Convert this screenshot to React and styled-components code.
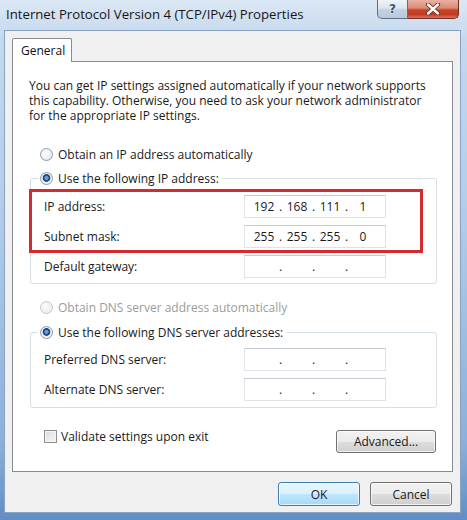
import React from "react";
import styled, { createGlobalStyle, css } from "styled-components";

const Global = createGlobalStyle`
  html, body { margin: 0; padding: 0; background: #8fb1d8; }
  * { box-sizing: border-box; }
`;

const FONT = `"Open Sans", "Noto Sans", "Liberation Sans", sans-serif`;

const Window = styled.div`
  width: 467px;
  height: 520px;
  display: flex;
  flex-direction: column;
  padding: 0 6px 7px 4px;
  background: linear-gradient(180deg, #dbe7f4 0%, #c4d8ee 8%, #b3cde9 40%, #8cb0da 85%, #5f8fc6 100%);
  font-family: ${FONT};
  color: #111;
`;

const TitleBar = styled.div`
  height: 30px;
  display: flex;
  align-items: flex-start;
  flex-shrink: 0;
`;

const TitleText = styled.div`
  padding: 5px 0 0 2px;
  font-size: 13.2px;
  line-height: 18px;
  color: #151515;
  white-space: nowrap;
`;

const Captions = styled.div`
  margin-left: auto;
  margin-right: 2px;
  display: flex;
`;

const CaptionButton = styled.div`
  height: 19px;
  display: flex;
  align-items: center;
  justify-content: center;
  border: 1px solid #5d6f86;
  border-top: none;
  ${(p) =>
    p.$kind === "close"
      ? css`
          width: 51px;
          border-color: #6e3025;
          border-left: none;
          border-radius: 0 0 5px 0;
          background: linear-gradient(180deg, #eab0a2 0%, #dc8a76 45%, #c7432b 55%, #c33a22 80%, #d9775c 100%);
        `
      : css`
          width: 31px;
          border-radius: 0 0 0 5px;
          background: linear-gradient(180deg, #eef3f8 0%, #dbe4ee 45%, #c2d0e0 55%, #b9c9dc 100%);
        `}
`;

const HelpGlyph = styled.span`
  font-family: "DejaVu Sans", sans-serif;
  font-size: 12px;
  font-weight: bold;
  color: #3a4f6b;
  text-shadow: 0 0 1px #fff, 0 0 2px #fff;
  line-height: 1;
`;

const Client = styled.div`
  flex: 1;
  display: flex;
  flex-direction: column;
  background: #f0f0f0;
  border: 1px solid #8aa2bf;
  padding: 7px 7px 0 7px;
`;

const TabStrip = styled.div`
  display: flex;
  position: relative;
  z-index: 1;
`;

const Tab = styled.div`
  width: 60px;
  height: 24px;
  margin-bottom: -1px;
  padding: 3px 0 0 8px;
  background: #fff;
  border: 1px solid #898c95;
  border-bottom: none;
  border-radius: 2px 2px 0 0;
  font-size: 12px;
  line-height: 17px;
`;

const Panel = styled.div`
  flex: 1;
  display: flex;
  flex-direction: column;
  background: #fff;
  border: 1px solid #898c95;
  padding: 0 15px 0 16px;
`;

const Intro = styled.p`
  margin: 16px 0 0;
  font-size: 12px;
  line-height: 15px;
  color: #1a1a1a;
`;

const RadioRow = styled.label`
  display: flex;
  align-items: center;
  gap: 5px;
  height: 16px;
  font-size: 12px;
  white-space: nowrap;
  color: ${(p) => (p.$disabled ? "#9b9b9b" : "#1a1a1a")};
  margin: ${(p) => p.$margin || "0"};
`;

const RadioCircle = styled.span`
  width: 13px;
  height: 13px;
  border-radius: 50%;
  flex-shrink: 0;
  border: 1px solid ${(p) => (p.$disabled ? "#c4c8cc" : "#8e9aa8")};
  background: ${(p) =>
    p.$checked
      ? "radial-gradient(circle at 50% 45%, #6b9fd6 0 1.5px, #1f4f8f 2.5px, #24497a 3.5px, #e9eef4 4.2px, #f6f8fa 100%)"
      : p.$disabled
      ? "radial-gradient(circle at 40% 40%, #fbfbfb, #e6e8ea)"
      : "radial-gradient(circle at 40% 40%, #fdfdfd, #dfe3e8)"};
`;

const Group = styled.fieldset`
  margin: ${(p) => p.$top}px 0 0 1px;
  padding: ${(p) => p.$pt}px 0 ${(p) => p.$bottom}px 0;
  border: 1px solid #d5dfe5;
  border-radius: 3px;
  min-width: 0;
  display: flex;
  flex-direction: column;
  gap: 7px;
`;

const Legend = styled.legend`
  margin-left: 7px;
  padding: 0 3px 0 2px;
`;

const Row = styled.div`
  display: grid;
  grid-template-columns: 200px 142px;
  align-items: center;
  height: 23px;
  padding-left: 13px;
  font-size: 12px;
  color: #1a1a1a;
`;

const Highlight = styled.div`
  margin-left: -2px;
  width: 394px;
  border: 3px solid #d42a30;
  padding: 3px 0 2px;
  display: flex;
  flex-direction: column;
  gap: 7px;
  margin-bottom: -5px;
  & > ${Row} {
    padding-left: 12px;
  }
`;

const IpBox = styled.div`
  height: 23px;
  width: 142px;
  border: 1px solid #dfe3e8;
  border-top-color: #c8ccd2;
  background: #fff;
  display: flex;
  align-items: center;
  padding-left: 5px;
  font-size: 12px;
  color: #1a1a1a;
`;

const Octet = styled.span`
  width: 28px;
  text-align: center;
`;

const Dot = styled.span`
  width: 5px;
  text-align: center;
`;

const BottomRow = styled.div`
  margin-top: 21px;
  display: flex;
  align-items: flex-start;
  justify-content: space-between;
`;

const CheckRow = styled.label`
  display: flex;
  align-items: center;
  gap: 4px;
  margin-left: 15px;
  height: 14px;
  font-size: 12px;
  color: #1a1a1a;
`;

const CheckBox = styled.span`
  width: 13px;
  height: 13px;
  border: 1px solid #8f8f8f;
  background: linear-gradient(135deg, #dcdcdc, #f8f8f8);
  box-shadow: inset 0 0 0 1px #f4f4f4;
`;

const Button = styled.button`
  font-family: ${FONT};
  font-size: 12px;
  color: #1a1a1a;
  height: ${(p) => p.$h || 24}px;
  width: ${(p) => p.$w || 82}px;
  margin: ${(p) => p.$margin || "0"};
  border-radius: 3px;
  padding: 0;
  border: 1px solid ${(p) => (p.$default ? "#3c7fb1" : "#707070")};
  background: ${(p) =>
    p.$default
      ? "linear-gradient(180deg, #eaf6fd 0%, #d9f0fc 50%, #bee6fd 51%, #a7d9f5 100%)"
      : "linear-gradient(180deg, #f2f2f2 0%, #ebebeb 50%, #dddddd 51%, #cfcfcf 100%)"};
  box-shadow: inset 0 0 0 1px rgba(255, 255, 255, 0.7);
`;

const Footer = styled.div`
  display: flex;
  justify-content: flex-end;
  gap: 10px;
  padding: 10px 1px 6px 0;
`;

function Radio({ checked, disabled, children, margin }) {
  return (
    <RadioRow $disabled={disabled} $margin={margin}>
      <RadioCircle $checked={checked} $disabled={disabled} />
      {children}
    </RadioRow>
  );
}

function IpField({ value }) {
  const parts = value ? value.split(".") : ["", "", "", ""];
  return (
    <IpBox>
      {parts.map((p, i) => (
        <React.Fragment key={i}>
          <Octet>{p}</Octet>
          {i < 3 && <Dot>.</Dot>}
        </React.Fragment>
      ))}
    </IpBox>
  );
}

function Field({ label, value }) {
  return (
    <Row>
      <span>{label}</span>
      <IpField value={value} />
    </Row>
  );
}

export default function App() {
  return (
    <>
      <Global />
      <Window>
        <TitleBar>
          <TitleText>Internet Protocol Version 4 (TCP/IPv4) Properties</TitleText>
          <Captions>
            <CaptionButton $kind="help">
              <HelpGlyph>?</HelpGlyph>
            </CaptionButton>
            <CaptionButton $kind="close">
              <svg width="16" height="12" viewBox="0 0 16 12">
                <path d="M3 1.5 L13 10.5 M13 1.5 L3 10.5" stroke="#6a2a20" strokeWidth="4.2" strokeLinecap="round" />
                <path d="M3 1.5 L13 10.5 M13 1.5 L3 10.5" stroke="#ffffff" strokeWidth="2.4" strokeLinecap="round" />
              </svg>
            </CaptionButton>
          </Captions>
        </TitleBar>
        <Client>
          <TabStrip>
            <Tab>General</Tab>
          </TabStrip>
          <Panel>
            <Intro>
              You can get IP settings assigned automatically if your network supports
              this capability. Otherwise, you need to ask your network administrator
              for the appropriate IP settings.
            </Intro>
            <Radio margin="23px 0 0 11px">Obtain an IP address automatically</Radio>
            <Group $top={8} $pt={3} $bottom={5}>
              <Legend>
                <Radio checked>Use the following IP address:</Radio>
              </Legend>
              <Highlight>
                <Field label="IP address:" value="192.168.111.1" />
                <Field label="Subnet mask:" value="255.255.255.0" />
              </Highlight>
              <Field label="Default gateway:" />
            </Group>
            <Radio disabled margin="15px 0 0 11px">Obtain DNS server address automatically</Radio>
            <Group $top={9} $pt={8} $bottom={6}>
              <Legend>
                <Radio checked>Use the following DNS server addresses:</Radio>
              </Legend>
              <Field label="Preferred DNS server:" />
              <Field label="Alternate DNS server:" />
            </Group>
            <BottomRow>
              <CheckRow>
                <CheckBox />
                Validate settings upon exit
              </CheckRow>
              <Button $w={100} $h={23} $margin="1px 1px 0 0">Advanced...</Button>
            </BottomRow>
          </Panel>
          <Footer>
            <Button $default>OK</Button>
            <Button>Cancel</Button>
          </Footer>
        </Client>
      </Window>
    </>
  );
}
